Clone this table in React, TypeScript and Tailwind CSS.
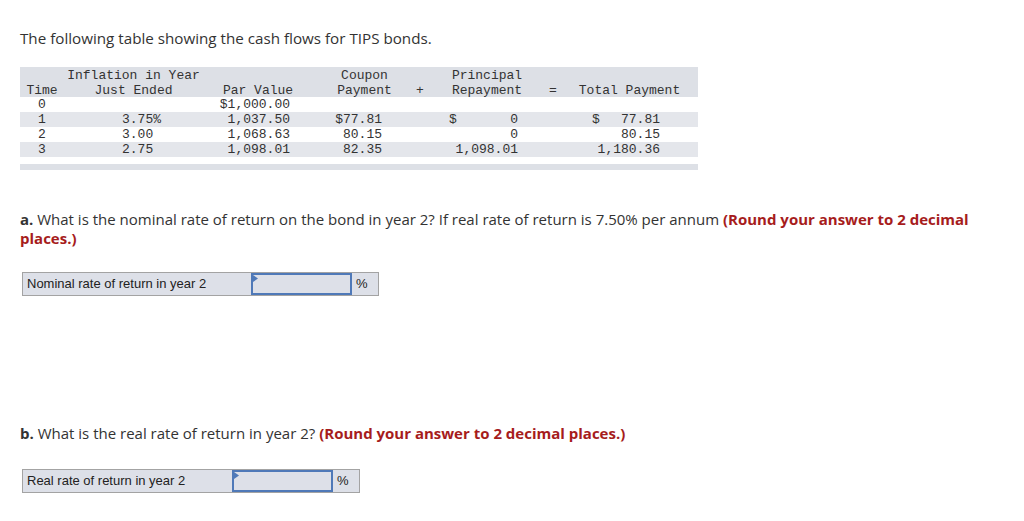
const rows = [
  { t: "0", infl: "", par: "$1,000.00", coupon: "", cur1: "", princ: "", cur2: "", total: "", shade: false },
  { t: "1", infl: "3.75%", par: "1,037.50", coupon: "$77.81", cur1: "$", princ: "0", cur2: "$", total: "77.81", shade: true },
  { t: "2", infl: "3.00", par: "1,068.63", coupon: "80.15", cur1: "", princ: "0", cur2: "", total: "80.15", shade: false },
  { t: "3", infl: "2.75", par: "1,098.01", coupon: "82.35", cur1: "", princ: "1,098.01", cur2: "", total: "1,180.36", shade: true },
];

function CashFlowTable() {
  return (
    <div className="w-[678px] font-['Liberation_Mono',monospace] text-[13px] leading-[15px] text-[#333]">
      <div className="bg-[#dde0e6] pt-[1px]">
        <div className="flex h-[15px]">
          <div className="w-[44px]" />
          <div className="w-[139px] text-center">Inflation in Year</div>
          <div className="w-[110px]" />
          <div className="w-[98px] pl-[5px] text-center">Coupon</div>
          <div className="w-[18px]" />
          <div className="w-[116px] text-center">Principal</div>
          <div className="w-[16px]" />
          <div className="w-[137px]" />
        </div>
        <div className="flex h-[14px]">
          <div className="w-[44px] text-center">Time</div>
          <div className="w-[139px] text-center">Just Ended</div>
          <div className="w-[110px] text-center">Par Value</div>
          <div className="w-[98px] pl-[5px] text-center">Payment</div>
          <div className="w-[18px] text-center">+</div>
          <div className="w-[116px] text-center">Repayment</div>
          <div className="w-[16px] text-center">=</div>
          <div className="w-[137px] text-center">Total Payment</div>
        </div>
      </div>
      {rows.map((r) => (
        <div key={r.t} className={`flex h-[15px] ${r.shade ? "bg-[#e4e6eb]" : "bg-white"}`}>
          <div className="w-[44px] text-center">{r.t}</div>
          <div className="w-[139px] pl-[58px]">{r.infl}</div>
          <div className="w-[110px] pr-[23px] text-right">{r.par}</div>
          <div className="w-[98px] pr-[29px] text-right">{r.coupon}</div>
          <div className="w-[18px]" />
          <div className="flex w-[116px] justify-between pl-[20px] pr-[27px]">
            <span>{r.cur1}</span>
            <span>{r.princ}</span>
          </div>
          <div className="w-[16px]" />
          <div className="flex w-[137px] justify-between pl-[31px] pr-[38px]">
            <span>{r.cur2}</span>
            <span>{r.total}</span>
          </div>
        </div>
      ))}
      <div className="h-[7px] bg-white" />
      <div className="h-[6px] bg-[#dde0e6]" />
    </div>
  );
}

function AnswerRow({ label, labelWidth }: { label: string; labelWidth: string }) {
  return (
    <div className="flex h-[24px] w-fit border border-[#a3a3a3] bg-[#dde0e8] font-['Liberation_Sans',Arial,sans-serif] text-[13px] text-[#222]">
      <div className={`${labelWidth} flex items-center pl-[4px]`}>{label}</div>
      <div className="relative w-[101px] border-2 border-[#4f79b8] bg-[#dde0e8]">
        {/* little flag in the corner of the answer box */}
        <svg className="absolute left-0 top-0" width="6" height="8" viewBox="0 0 6 8">
          <polygon points="0,0 5,3.5 0,7" fill="#4f79b8" />
        </svg>
      </div>
      <div className="flex w-[26px] items-center pl-[4px]">%</div>
    </div>
  );
}

export default function App() {
  return (
    <div className="h-[521px] w-[1024px] bg-white pl-[20px] pt-[28px] font-['Open_Sans',sans-serif] text-[#333]">
      <p className="text-[15.2px] leading-[20px]">The following table showing the cash flows for TIPS bonds.</p>

      <div className="mt-[19px]">
        <CashFlowTable />
      </div>

      <p className="mt-[40px] w-[950px] text-[15px] leading-[19px]">
        <span className="font-bold">a.</span> What is the nominal rate of return on the bond in year 2? If real rate of
        return is 7.50% per annum{" "}
        <span className="font-bold text-[#a61c1c]">(Round your answer to 2 decimal places.)</span>
      </p>

      <div className="mt-[24px] pl-[2px]">
        <AnswerRow label="Nominal rate of return in year 2" labelWidth="w-[228px]" />
      </div>

      <p className="mt-[128px] text-[15px] leading-[19px]">
        <span className="font-bold">b.</span> What is the real rate of return in year 2?{" "}
        <span className="font-bold text-[#a61c1c]">(Round your answer to 2 decimal places.)</span>
      </p>

      <div className="mt-[26px] pl-[2px]">
        <AnswerRow label="Real rate of return in year 2" labelWidth="w-[209px]" />
      </div>
    </div>
  );
}
